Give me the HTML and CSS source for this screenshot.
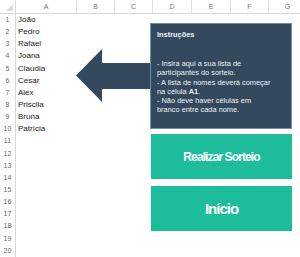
FILE: index.html
```html
<!DOCTYPE html>
<html lang="pt">
<head>
  <meta charset="UTF-8" />
  <title>Sorteio</title>
  <link rel="stylesheet" href="styles.css">
</head>
<body>
  <div class="sheet">
    <div class="row head">
      <div class="num corner"><span class="tri"></span></div>
      <div class="col a">A</div>
      <div class="col">B</div>
      <div class="col">C</div>
      <div class="col w39">D</div>
      <div class="col w39">E</div>
      <div class="col">F</div>
      <div class="col">G</div>
    </div>
    <div class="row"><div class="num">1</div><div class="cell">João</div></div>
    <div class="row"><div class="num">2</div><div class="cell">Pedro</div></div>
    <div class="row"><div class="num">3</div><div class="cell">Rafael</div></div>
    <div class="row"><div class="num">4</div><div class="cell">Joana</div></div>
    <div class="row"><div class="num">5</div><div class="cell">Claudia</div></div>
    <div class="row"><div class="num">6</div><div class="cell">Cesar</div></div>
    <div class="row"><div class="num">7</div><div class="cell">Alex</div></div>
    <div class="row"><div class="num">8</div><div class="cell">Priscila</div></div>
    <div class="row"><div class="num">9</div><div class="cell">Bruna</div></div>
    <div class="row"><div class="num">10</div><div class="cell">Patrícia</div></div>
    <div class="row"><div class="num">11</div><div class="cell"></div></div>
    <div class="row"><div class="num">12</div><div class="cell"></div></div>
    <div class="row"><div class="num">13</div><div class="cell"></div></div>
    <div class="row"><div class="num">14</div><div class="cell"></div></div>
    <div class="row"><div class="num">15</div><div class="cell"></div></div>
    <div class="row"><div class="num">16</div><div class="cell"></div></div>
    <div class="row"><div class="num">17</div><div class="cell"></div></div>
    <div class="row"><div class="num">18</div><div class="cell"></div></div>
    <div class="row"><div class="num">19</div><div class="cell"></div></div>
    <div class="row"><div class="num">20</div><div class="cell"></div></div>
  </div>

  <svg class="arrow" width="80" height="54" viewBox="0 0 80 54">
    <polygon points="0,26.5 26,0 26,14 80,14 80,40 26,40 26,53" fill="#34495e" />
  </svg>

  <div class="note">
    <b>Instruções</b>
    <p>- Insira aqui a sua lista de<br>
    participantes do sorteio.<br>
    - A lista de nomes deverá começar<br>
    na célula <b>A1</b>.<br>
    - Não deve haver células em<br>
    branco entre cada nome.</p>
  </div>

  <div class="btn btn-sorteio">Realizar Sorteio</div>
  <div class="btn btn-inicio">Início</div>
</body>
</html>
```

FILE: styles.css
```css
body { margin: 0; width: 300px; height: 257px; overflow: hidden; background: #fff; position: relative; font-family: "Liberation Sans", Arial, sans-serif; }

.sheet { width: 300px; }
.row { display: flex; height: 12.15px; }
.row.head { height: 13px; border-bottom: 1px solid #d8d8d8; }
.num { width: 15px; flex: none; border-right: 1px solid #d8d8d8; color: #6a6a6a; font-size: 7px; text-align: center; line-height: 12.15px; }
.head .num { line-height: 13px; }
.corner { position: relative; }
.tri { position: absolute; right: 2px; bottom: 2px; width: 0; height: 0; border-left: 7px solid transparent; border-bottom: 7px solid #dcdcdc; }
.col { width: 37px; flex: none; border-right: 1px solid #e2e2e2; color: #777; font-size: 7px; text-align: center; line-height: 13px; }
.col.a { width: 60px; }
.col.w39 { width: 38px; }
.cell { padding-left: 2px; font-size: 8px; color: #1a1a1a; line-height: 12.15px; }

.arrow { position: absolute; left: 76px; top: 49px; }

.note { position: absolute; left: 150px; top: 23px; width: 128px; height: 92px; padding: 6px; background: #34495e; border: 1px solid #6f8fae; color: #eef2f6; font-size: 7.4px; line-height: 9.2px; white-space: nowrap; }
.note p { margin: 20px 0 0; }

.btn { position: absolute; left: 151px; width: 141px; height: 45px; background: #1dbc9b; color: #fff; display: flex; align-items: center; justify-content: center; font-weight: bold; }
.btn-sorteio { top: 134px; font-size: 12px; letter-spacing: -0.9px; }
.btn-inicio { top: 186px; font-size: 15px; letter-spacing: -1px; }
```
